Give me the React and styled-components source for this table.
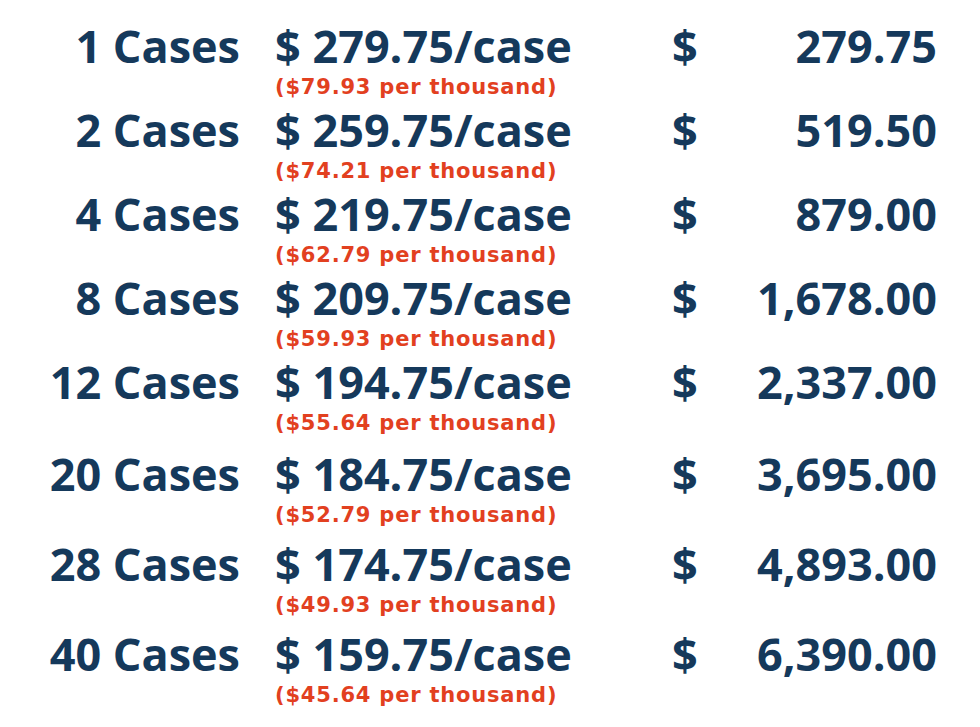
import React from 'react';
import styled, { createGlobalStyle } from 'styled-components';

const rows = [
  { qty: 1, price: '279.75', perK: '79.93', total: '279.75', gap: 0 },
  { qty: 2, price: '259.75', perK: '74.21', total: '519.50', gap: 6 },
  { qty: 4, price: '219.75', perK: '62.79', total: '879.00', gap: 6 },
  { qty: 8, price: '209.75', perK: '59.93', total: '1,678.00', gap: 6 },
  { qty: 12, price: '194.75', perK: '55.64', total: '2,337.00', gap: 6 },
  { qty: 20, price: '184.75', perK: '52.79', total: '3,695.00', gap: 14 },
  { qty: 28, price: '174.75', perK: '49.93', total: '4,893.00', gap: 12 },
  { qty: 40, price: '159.75', perK: '45.64', total: '6,390.00', gap: 12 },
];

const Global = createGlobalStyle`
  body {
    margin: 0;
    background: #ffffff;
  }
`;

const Table = styled.div`
  width: 980px;
  padding-top: 22px;
  display: flex;
  flex-direction: column;
  font-family: 'Open Sans', 'DejaVu Sans', sans-serif;
  color: #15395b;
`;

const Row = styled.div`
  display: grid;
  grid-template-columns: 275px 397px 28px 237px;
  align-items: start;
  margin-top: ${p => p.$gap}px;
`;

const MainText = styled.div`
  font-size: 45px;
  font-weight: 700;
  line-height: 48px;
  white-space: nowrap;
`;

const Qty = styled(MainText)`
  text-align: right;
  padding-right: 35px;
`;

const Dollar = styled(MainText)`
  text-align: left;
`;

const Amount = styled(MainText)`
  text-align: right;
`;

const PriceCell = styled.div`
  display: flex;
  flex-direction: column;
`;

const PerThousand = styled.div`
  margin-top: 4px;
  font-family: 'DejaVu Sans', 'Open Sans', sans-serif;
  font-size: 21px;
  font-weight: 700;
  letter-spacing: 0.8px;
  line-height: 26px;
  color: #e2401f;
  white-space: nowrap;
`;

export default function App() {
  return (
    <>
      <Global />
      <Table>
        {rows.map(r => (
          <Row key={r.qty} $gap={r.gap}>
            <Qty>{r.qty} Cases</Qty>
            <PriceCell>
              <MainText>$ {r.price}/case</MainText>
              <PerThousand>(${r.perK} per thousand)</PerThousand>
            </PriceCell>
            <Dollar>$</Dollar>
            <Amount>{r.total}</Amount>
          </Row>
        ))}
      </Table>
    </>
  );
}
